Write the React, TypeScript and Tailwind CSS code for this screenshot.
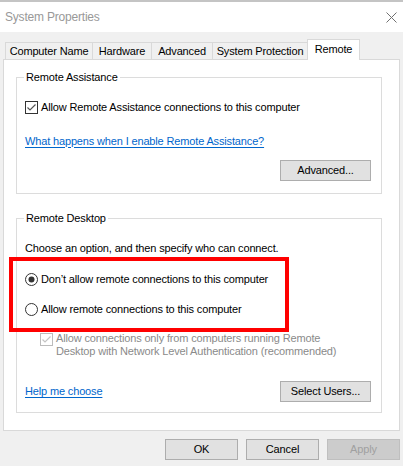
import type { ReactNode } from "react";

function CheckBox({ disabled }: { disabled?: boolean }) {
  const c = disabled ? "#bcbcbc" : "#333333";
  return (
    <svg width="13" height="13" viewBox="0 0 13 13" className="shrink-0">
      <rect x="0.5" y="0.5" width="12" height="12" fill="white" stroke={c} />
      <path d="M2.5 6.5 L5 9 L10.5 3.5" fill="none" stroke={disabled ? "#c4c4c4" : "#555555"} strokeWidth="1.2" />
    </svg>
  );
}

function Radio({ checked }: { checked?: boolean }) {
  return (
    <svg width="13" height="13" viewBox="0 0 13 13" className="shrink-0">
      <circle cx="6.5" cy="6.5" r="6" fill="white" stroke="#333333" />
      {checked && <circle cx="6.5" cy="6.5" r="3" fill="#333333" />}
    </svg>
  );
}

function Button({ children, width, disabled }: { children: ReactNode; width: string; disabled?: boolean }) {
  return (
    <button
      className={
        disabled
          ? `${width} h-[21px] border border-[#bfbfbf] bg-[#cccccc] text-[#a0a0a0]`
          : `${width} h-[21px] border border-[#adadad] bg-[#e1e1e1] text-black`
      }
    >
      {children}
    </button>
  );
}

function Link({ children }: { children: ReactNode }) {
  return <span className="text-[#0066cc] underline underline-offset-2">{children}</span>;
}

const tabs = [
  { label: "Computer Name", w: "w-[87px]" },
  { label: "Hardware", w: "w-[59px]" },
  { label: "Advanced", w: "w-[61px]" },
  { label: "System Protection", w: "w-[95px]" },
];

export default function App() {
  return (
    <div className="relative w-[403px] h-[466px] overflow-hidden bg-[#f0f0f0] flex flex-col font-['Liberation_Sans',Arial,sans-serif] text-[11px] tracking-[-0.15px] text-black whitespace-nowrap">
      {/* title bar */}
      <div className="h-[32px] shrink-0 bg-white border-t-2 border-[#c4c4c4] flex items-center justify-between pl-[5px] pr-[6px]">
        <span className="text-[12px] tracking-[-0.2px] text-[#999999]">System Properties</span>
        <svg width="11" height="11" viewBox="0 0 11 11">
          <path d="M0.5 0.5 L10.5 10.5 M10.5 0.5 L0.5 10.5" stroke="#707070" strokeWidth="1" />
        </svg>
      </div>

      {/* tab strip */}
      <div className="h-[27px] shrink-0 flex items-end pl-[5px]">
        {tabs.map((t) => (
          <div
            key={t.label}
            className={`${t.w} h-[17px] border-l border-t border-[#d9d9d9] flex items-center justify-center`}
          >
            {t.label}
          </div>
        ))}
        <div className="relative z-10 w-[53px] h-[21px] -mb-px bg-white border-l border-t border-r border-[#d9d9d9] flex items-center justify-center pb-[2px]">
          Remote
        </div>
      </div>

      {/* tab page */}
      <div className="mx-[3px] h-[372px] shrink-0 bg-white border border-[#d9d9d9] pl-[12px]">
        <div className="relative mt-[17px] w-[366px] h-[117px] border border-[#dcdcdc] pt-[21px] pl-[8px]">
          <span className="absolute left-[7px] -top-[8px] px-[2px] bg-white leading-[14px]">Remote Assistance</span>
          <div className="h-[16px] flex items-center gap-[3px]">
            <CheckBox />
            <span>Allow Remote Assistance connections to this computer</span>
          </div>
          <div className="mt-[18px] h-[16px] flex items-center">
            <Link>What happens when I enable Remote Assistance?</Link>
          </div>
          <div className="mt-[11px] flex justify-end pr-[10px]">
            <Button width="w-[91px]">Advanced...</Button>
          </div>
        </div>

        <div className="relative mt-[24px] w-[366px] h-[195px] border border-[#dcdcdc] pt-[21px] pl-[8px]">
          <span className="absolute left-[7px] -top-[8px] px-[2px] bg-white leading-[14px]">Remote Desktop</span>
          <div className="h-[16px] flex items-center">Choose an option, and then specify who can connect.</div>
          <div className="mt-[15px] h-[16px] flex items-center gap-[3px]">
            <Radio checked />
            <span>Don’t allow remote connections to this computer</span>
          </div>
          <div className="mt-[14px] h-[16px] flex items-center gap-[3px]">
            <Radio />
            <span>Allow remote connections to this computer</span>
          </div>
          <div className="mt-[15px] ml-[15px] flex items-start gap-[3px] text-[#8a8a8a] leading-[13px]">
            <div className="mt-[1px]">
              <CheckBox disabled />
            </div>
            <span>
              Allow connections only from computers running Remote
              <br />
              Desktop with Network Level Authentication (recommended)
            </span>
          </div>
          <div className="mt-[23px] h-[21px] flex items-center justify-between pr-[10px]">
            <Link>Help me choose</Link>
            <Button width="w-[91px]">Select Users...</Button>
          </div>
        </div>
      </div>

      {/* dialog buttons */}
      <div className="mt-[8px] flex justify-end gap-[8px] pr-[3px]">
        <Button width="w-[73px]">OK</Button>
        <Button width="w-[73px]">Cancel</Button>
        <Button width="w-[73px]" disabled>
          Apply
        </Button>
      </div>

      {/* highlight around the radio choices */}
      <div className="absolute left-[9px] top-[257px] w-[280px] h-[75px] border-[4px] border-[#ff0000]" />
    </div>
  );
}
